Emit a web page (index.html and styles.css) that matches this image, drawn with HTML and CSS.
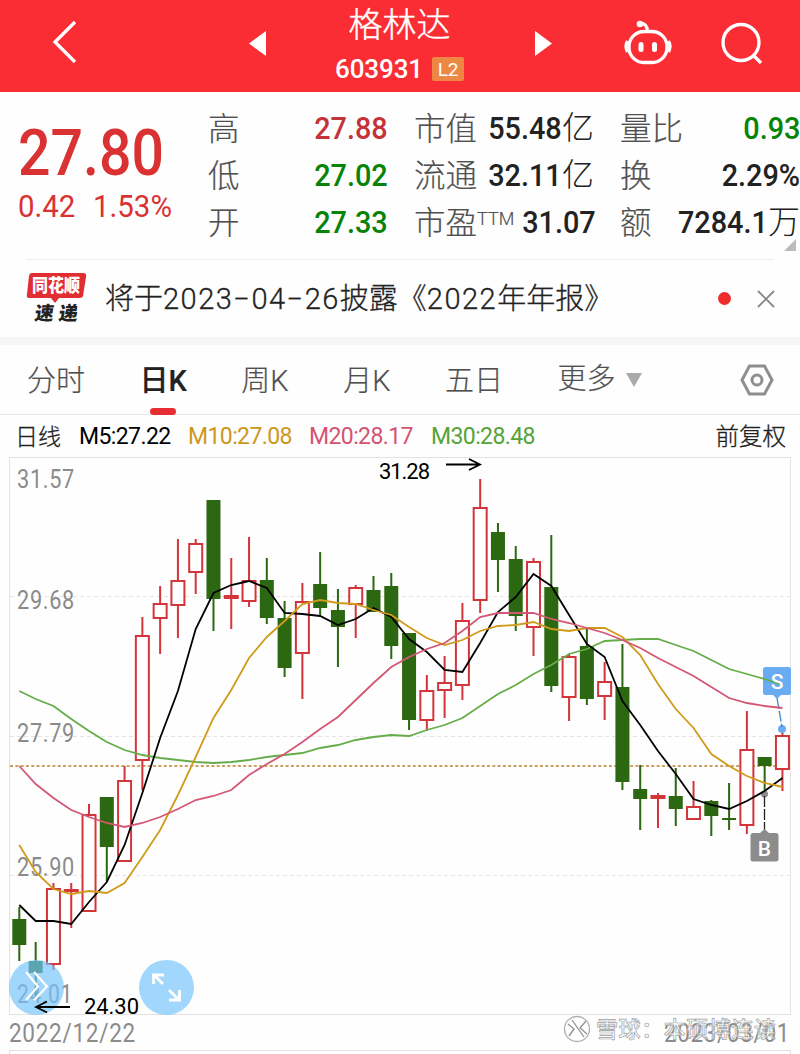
FILE: index.html
```
<!DOCTYPE html>
<html lang="zh-CN">
<head>
    <meta charset="UTF-8">
    <meta name="viewport" content="width=device-width, initial-scale=1.0">
    <title>格林达 603931</title>
    <link rel="stylesheet" href="styles.css">
</head>
<body>

<header class="topbar">
    <svg class="back" width="26" height="44" viewBox="0 0 26 44"><path d="M24 2 L4 22 L24 42"/></svg>
    <svg class="arrow prev" width="17" height="25" viewBox="0 0 17 25"><path d="M17 0 V25 L0 12.5z"/></svg>
    <div class="stock">
        <div class="stock-name">格林达</div>
        <div class="stock-code"><span>603931</span><span class="level">L2</span></div>
    </div>
    <svg class="arrow next" width="17" height="25" viewBox="0 0 17 25"><path d="M0 0 V25 L17 12.5z"/></svg>
    <svg class="robot" width="48" height="46" viewBox="0 0 48 46">
        <rect x="5" y="11.500" width="38" height="31" rx="15"/>
        <path d="M16 3.500 Q23 3 23.500 11"/>
        <path class="ear" d="M3.500 21 Q0.500 26 3.500 32 M44.500 21 Q47.500 26 44.500 32"/>
        <circle class="fill" cx="16" cy="4" r="3.300"/>
        <rect class="fill" x="14.500" y="22" width="5" height="10" rx="2.500"/>
        <rect class="fill" x="28" y="22" width="5" height="10" rx="2.500"/>
    </svg>
    <svg class="search" width="44" height="44" viewBox="0 0 44 44"><circle cx="21" cy="20.500" r="18"/><path d="M33 33 L41 41"/></svg>
</header>

<section class="quote">
    <div class="price">
        <div class="last"><span class="num">27.80</span></div>
        <div class="change"><span class="num">0.42</span><span class="num">1.53%</span></div>
    </div>
    <div class="col">
        <div class="row"><label>高</label><span class="num up">27.88</span></div>
        <div class="row"><label>低</label><span class="num down">27.02</span></div>
        <div class="row"><label>开</label><span class="num down">27.33</span></div>
    </div>
    <div class="col col-mid">
        <div class="row"><label>市值</label><span class="val"><span class="num">55.48</span>亿</span></div>
        <div class="row"><label>流通</label><span class="val"><span class="num">32.11</span>亿</span></div>
        <div class="row"><label>市盈<sup>TTM</sup></label><span class="num">31.07</span></div>
    </div>
    <div class="col col-last">
        <div class="row"><label>量比</label><span class="num down">0.93</span></div>
        <div class="row"><label>换</label><span class="num">2.29%</span></div>
        <div class="row"><label>额</label><span class="val"><span class="num">7284.1</span>万</span></div>
    </div>
    <svg class="corner" width="12" height="12" viewBox="0 0 12 12"><path d="M12 0 V12 H0z"/></svg>
</section>

<section class="notice">
    <svg class="logo" width="62" height="54" viewBox="0 0 62 54">
        <path class="logo-bg" d="M6 1 H57 Q61 1 60 5 L57 24 Q56.500 26 54 26 H33 L29 31 L25 26 H3 Q0 26 1 22 L3 4 Q3.500 1 6 1z"/>
        <text class="logo-top" x="6" y="20" textLength="48" lengthAdjust="spacingAndGlyphs">同花顺</text>
        <text class="logo-bottom" transform="translate(8 48) skewX(-8)" textLength="43">速递</text>
    </svg>
    <p>将于<span class="wide">2023−04−26</span>披露《<span class="wide">2022</span>年年报》</p>
    <i class="dot"></i>
    <svg class="close" width="18" height="18" viewBox="0 0 18 18"><path d="M1 1 L17 17 M17 1 L1 17"/></svg>
</section>

<nav class="tabs">
    <a>分时</a>
    <a class="active">日K</a>
    <a>周K</a>
    <a>月K</a>
    <a>五日</a>
    <a class="more">更多<svg width="16" height="14" viewBox="0 0 16 14"><path d="M0 0 H16 L8 14z"/></svg></a>
    <svg class="setting" width="34" height="32" viewBox="0 0 34 32">
        <path d="M9.500 2 H24.500 L32 16 L24.500 30 H9.500 L2 16z"/>
        <circle cx="17" cy="16" r="5"/>
    </svg>
</nav>

<div class="legend">
    <span class="period">日线</span>
    <span class="m5">M5:27.22</span>
    <span class="m10">M10:27.08</span>
    <span class="m20">M20:28.17</span>
    <span class="m30">M30:28.48</span>
    <span class="adjust">前复权</span>
</div>

<svg id="chart" class="chart" width="800" height="598" viewBox="0 456 800 598">
    <path class="frame" d="M9.500 457.500 H790.500 V1014.500 H9.500z M9.500 1054 V1050.500 H790.500 V1054"/>
    <path class="grid" d="M10 596.500 H790 M10 736.500 H790 M10 875.500 H790"/>
    <g class="axis">
        <text x="17" y="488" textLength="58" lengthAdjust="spacingAndGlyphs">31.57</text>
        <text x="17" y="609" textLength="58" lengthAdjust="spacingAndGlyphs">29.68</text>
        <text x="17" y="742" textLength="58" lengthAdjust="spacingAndGlyphs">27.79</text>
        <text x="17" y="876" textLength="58" lengthAdjust="spacingAndGlyphs">25.90</text>
        <text x="17" y="1003" textLength="56" lengthAdjust="spacingAndGlyphs">24.01</text>
        <text x="9" y="1042" textLength="127" lengthAdjust="spacingAndGlyphs">2022/12/22</text>
        <text x="664" y="1042" textLength="126" lengthAdjust="spacingAndGlyphs">2023/03/01</text>
    </g>
    <path class="now" d="M10 766 H790"/>
    <g id="candles"></g>

    <text class="peak" x="379" y="479" textLength="51">31.28</text>
    <path class="pointer" d="M446 464.500 H479 M469 459 L480 464.500 L469 470"/>
    <text class="peak" x="84" y="1014" textLength="55">24.30</text>

    <g class="tools">
        <circle cx="36.500" cy="987.500" r="27.500"/>
        <circle cx="166.500" cy="987.500" r="27.500"/>
        <path d="M26 972 L38 986.500 L26 1000 M34 972 L47 986.500 L34 1000"/>
        <path class="expand" d="M163 984 L154 975 M153.500 984 V975 H164 M169 990 L179 1000 M179.500 990 V1000 H169"/>
    </g>
    <path class="pointer" d="M70 1007 H36 M47 1001.500 L36 1007 L47 1012.500"/>

    <g class="mark sell">
        <circle cx="782" cy="729" r="4"/>
        <path class="stem" d="M777 698 L782 727"/>
        <path d="M765.500 667 H788.500 Q791 667 791 669.500 V692.500 Q791 695 788.500 695 H781 L777 699 L773 695 H765.500 Q763 695 763 692.500 V669.500 Q763 667 765.500 667z"/>
    </g>
    <g class="mark buy">
        <circle cx="764.500" cy="794" r="3.500"/>
        <path class="stem" d="M764.500 796 V830"/>
        <path d="M753 833 H760 L764.500 829 L769 833 H776 Q778.500 833 778.500 835.500 V859 Q778.500 861.500 776 861.500 H753 Q750.500 861.500 750.500 859 V835.500 Q750.500 833 753 833z"/>
    </g>
    <g id="averages"></g>
    <g class="mark">
        <text x="777" y="689">S</text>
        <text x="764.500" y="855.500">B</text>
    </g>

    <g class="watermark">
        <circle cx="577" cy="1029" r="12.500"/>
        <path d="M568 1024 L574 1029 L569 1036 M572 1020 L584 1037 M586 1021 L580 1028 L587 1034"/>
        <text x="596" y="1037" textLength="180">雪球：本硕博连读</text>
    </g>
</svg>

<script src="chart.js"></script>
</body>
</html>
```
FILE: chart.js
```
// [high, body top, body bottom, low, up/down]
const candles = [
    [907, 919, 945, 961, "d"], [942, 961, 973, 998, "d"], [883, 888, 965, 970, "u"],
    [883, 889, 892, 928, "u"], [804, 814, 912, 912, "u"], [797, 797, 847, 881, "d"],
    [766, 780, 862, 862, "u"], [617, 635, 761, 790, "u"], [586, 603, 619, 654, "u"],
    [539, 580, 606, 638, "u"], [539, 543, 573, 594, "u"], [500, 500, 599, 631, "d"],
    [558, 595, 599, 629, "u"], [537, 580, 602, 607, "u"], [558, 580, 618, 624, "d"],
    [601, 618, 668, 677, "d"], [583, 601, 654, 699, "u"], [552, 584, 608, 615, "d"],
    [589, 610, 627, 667, "d"], [585, 587, 605, 638, "u"], [576, 590, 612, 612, "d"],
    [573, 586, 646, 659, "d"], [633, 633, 720, 730, "d"], [675, 690, 721, 731, "u"],
    [656, 682, 691, 718, "u"], [603, 620, 686, 700, "u"], [479, 507, 601, 613, "u"],
    [523, 532, 560, 592, "d"], [546, 559, 616, 631, "d"], [558, 561, 628, 656, "u"],
    [535, 587, 686, 692, "d"], [654, 656, 698, 721, "u"], [628, 646, 699, 705, "d"],
    [662, 681, 697, 720, "u"], [644, 687, 782, 790, "d"], [765, 789, 799, 830, "d"],
    [793, 795, 799, 828, "u"], [768, 796, 809, 826, "d"], [781, 806, 820, 820, "u"],
    [800, 801, 816, 836, "d"], [783, 818, 820, 830, "d"], [711, 749, 826, 834, "u"],
    [757, 757, 766, 794, "d"], [730, 735, 770, 791, "u"]
];

const averages = {
    m30: [691, 699, 706, 719, 731, 742, 750, 755, 758, 760, 762, 763, 762, 760, 757, 755, 753, 748, 745, 740, 737, 735, 736, 730, 725, 718, 706, 694, 685, 674, 665, 654, 649, 641, 640, 639, 639, 645, 651, 660, 669, 674, 679, 685],
    m5: [905, 921, 921, 924, 902, 882, 845, 793, 738, 691, 629, 593, 585, 581, 588, 613, 614, 616, 625, 619, 608, 617, 639, 652, 670, 672, 643, 612, 597, 574, 586, 615, 644, 657, 701, 725, 751, 774, 799, 805, 809, 801, 791, 778],
    m10: [845, 872, 889, 894, 891, 893, 883, 857, 830, 795, 757, 718, 690, 658, 637, 621, 604, 600, 603, 604, 610, 615, 627, 638, 645, 640, 631, 626, 625, 622, 629, 631, 628, 628, 637, 655, 684, 709, 728, 754, 766, 776, 783, 787],
    m20: [766, 784, 798, 810, 817, 823, 827, 823, 817, 809, 800, 796, 790, 775, 764, 754, 742, 729, 717, 700, 683, 667, 657, 649, 643, 631, 617, 613, 613, 613, 619, 623, 628, 633, 640, 648, 658, 667, 676, 687, 698, 703, 706, 708]
};

const xAt = i => i === 0 ? 19.3 : 17.9 + i * 17.78;

let bodies = "";
candles.forEach(([high, top, bottom, low, dir], i) => {
    const x = xAt(i);
    const inset = dir === "u" ? 1 : 0;
    bodies += `<g class="${dir}">
        <path d="M${x} ${high} V${top} M${x} ${bottom} V${low}"/>
        <rect x="${x - 7 + inset / 2}" y="${top + inset}" width="${14 - inset}" height="${bottom - top - inset * 2}"/>
    </g>`;
});
document.getElementById("candles").innerHTML = bodies;

let lines = "";
for (const name in averages) {
    const points = averages[name].map((y, i) => `${xAt(i)},${y}`).join(" ");
    lines += `<polyline class="line-${name}" points="${points}"/>`;
}
document.getElementById("averages").innerHTML = lines;
```
FILE: styles.css
```
* {
    box-sizing: border-box;
}

body {
    margin: 0;
    width: 800px;
    height: 1054px;
    overflow: hidden;
    background: #fefefe;
    color: #222;
    font-family: Roboto, "Noto Sans CJK SC", sans-serif;
    font-weight: 300;
}

svg {
    display: block;
    flex: none;
}

/* header */
.topbar {
    display: flex;
    align-items: flex-start;
    height: 92px;
    background: #fb2d34;
    color: #fff;
}

.topbar svg {
    fill: none;
    stroke: #fff;
    stroke-width: 3.3;
}

.back {
    margin: 20px 0 0 51px;
}

.topbar .arrow {
    fill: #fff;
    stroke: none;
}

.prev {
    margin: 31px 0 0 172px;
}

.next {
    margin: 31px 0 0 33px;
}

.stock {
    width: 236px;
    padding-left: 31px;
    text-align: center;
}

.stock-name {
    height: 49px;
    line-height: 51px;
    font-size: 34px;
    -webkit-text-stroke: 0.4px;
}

.stock-code {
    display: flex;
    justify-content: center;
    align-items: center;
    gap: 9px;
    height: 40px;
    font-size: 26px;
    font-weight: 500;
    letter-spacing: -0.1px;
}

.level {
    width: 32px;
    height: 24px;
    line-height: 25px;
    border-radius: 2px;
    background: #ee8743;
    font-size: 19px;
    font-weight: 400;
}

.robot {
    margin: 20px 0 0 72px;
}

.topbar .robot .fill {
    fill: #fff;
    stroke: none;
}

.search {
    margin: 22px 0 0 48px;
}

/* quote */
.quote {
    position: relative;
    display: flex;
    height: 168px;
    padding-top: 13px;
}

.num {
    display: inline-block;
    font-weight: 500;
    transform: scaleX(0.9);
    transform-origin: right;
}

.price {
    width: 208px;
    padding-left: 18px;
    color: #da3133;
}

.price .num {
    transform: scaleX(0.88);
    transform-origin: left;
}

.last {
    height: 81px;
    padding-top: 16px;
    line-height: 65px;
    font-size: 65px;
}

.change {
    display: flex;
    gap: 13px;
    padding-top: 3px;
    line-height: 34px;
    font-size: 32px;
}

.price .change .num {
    font-weight: 400;
    transform: scaleX(0.92);
}

.col {
    width: 180px;
}

.col-mid,
.col-last {
    margin-left: 26px;
}

.row {
    display: flex;
    justify-content: space-between;
    height: 47px;
    line-height: 47px;
    font-size: 32px;
    white-space: nowrap;
}

.row label {
    padding-top: 1px;
    color: #505050;
    font-size: 31.500px;
    -webkit-text-stroke: 0.2px;
}

.row .val {
    margin-left: -20px;
}

.row sup {
    font-size: 18px;
    line-height: 0;
    vertical-align: 9px;
}

.up {
    color: #c43339;
}

.down {
    color: #078307;
}

.corner {
    position: absolute;
    right: 4px;
    bottom: 9px;
    fill: #bbb;
}

/* notice */
.notice {
    display: flex;
    align-items: center;
    height: 85px;
    padding: 0 25px 0 26px;
    border-bottom: 8px solid #f5f5f5;
    position: relative;
}

.notice::before {
    content: "";
    position: absolute;
    top: -1px;
    left: 26px;
    right: 26px;
    height: 1px;
    background: #eee;
}

.logo-bg {
    fill: #e02e32;
}

.logo-top {
    fill: #fff;
    font-size: 18px;
    font-weight: 900;
}

.logo-bottom {
    fill: #222;
    font-size: 19px;
    font-weight: 900;
}

.notice p {
    flex: 1;
    margin: 0 0 5px 17px;
    font-size: 29px;
    -webkit-text-stroke: 0.3px;
    white-space: nowrap;
}

.wide {
    letter-spacing: 1.500px;
}

.dot {
    width: 13px;
    height: 13px;
    margin-right: 26px;
    border-radius: 50%;
    background: #ee2c2c;
}

.close {
    fill: none;
    stroke: #888;
    stroke-width: 1.8;
}

/* tabs */
.tabs {
    display: flex;
    align-items: center;
    gap: 54.500px;
    height: 70px;
    padding: 0 26px 0 27px;
    border-bottom: 1px solid #eaeaea;
    color: #505050;
    font-size: 29px;
    -webkit-text-stroke: 0.2px;
}

.tabs a {
    position: relative;
    height: 70px;
    line-height: 73px;
    white-space: nowrap;
}

.tabs .active {
    color: #222;
    font-weight: 500;
}

.active::after {
    content: "";
    position: absolute;
    left: 50%;
    bottom: 0;
    width: 26px;
    height: 7px;
    margin-left: -13px;
    border-radius: 4px;
    background: #e62e32;
}

.more {
    display: flex;
    align-items: center;
    gap: 10px;
    fill: #aaa;
}

.setting {
    margin-left: auto;
    fill: none;
    stroke: #8e8e8e;
    stroke-width: 3;
}

/* legend */
.legend {
    display: flex;
    align-items: center;
    height: 41px;
    padding: 2px 14px 0 15px;
    font-size: 23px;
    font-weight: 400;
    letter-spacing: -0.600px;
    white-space: nowrap;
}

.period,
.adjust {
    padding-bottom: 3px;
    font-weight: 300;
    letter-spacing: 0;
    -webkit-text-stroke: 0.3px;
}

.period {
    width: 64px;
}

.m5 {
    width: 109px;
    color: #000;
}

.m10 {
    width: 121px;
    color: #cc981b;
}

.m20 {
    width: 122px;
    color: #d45373;
}

.m30 {
    color: #56a437;
}

.adjust {
    margin-left: auto;
    font-size: 23.500px;
}

/* chart */
.frame {
    fill: none;
    stroke: #e2e2e2;
}

.grid {
    stroke: #e4e4e4;
    stroke-dasharray: 4 3;
}

.axis {
    fill: #8b8b8b;
    font-size: 25.500px;
    font-weight: 400;
    letter-spacing: 0.800px;
}

.now {
    stroke: #bd812c;
    stroke-width: 1.400;
    stroke-dasharray: 3 2.300;
}

.u {
    fill: #fff;
    stroke: #d3353b;
    stroke-width: 2;
}

.d {
    fill: #2c6711;
    stroke: #2c6711;
    stroke-width: 2;
}

.d rect {
    stroke: none;
}

#averages {
    fill: none;
    stroke-width: 1.800;
}

.line-m5 {
    stroke: #000;
}

.line-m10 {
    stroke: #d09b1b;
}

.line-m20 {
    stroke: #d45775;
}

.line-m30 {
    stroke: #66ad4a;
}

.peak {
    fill: #000;
    font-size: 22px;
    font-weight: 400;
}

.pointer {
    fill: none;
    stroke: #000;
    stroke-width: 1.800;
}

.tools circle {
    fill: #74c2fc;
    fill-opacity: 0.68;
}

.tools path {
    fill: none;
    stroke: #fff;
    stroke-width: 2.200;
}

.tools .expand {
    stroke-width: 2.800;
}

.mark text {
    fill: #fff;
    stroke: none;
    font-size: 21px;
    font-weight: 500;
    text-anchor: middle;
}

.sell {
    fill: #69acf3;
}

.buy {
    fill: #8c8c8c;
}

.sell .stem {
    stroke: #3f86c8;
    stroke-width: 1.300;
    stroke-dasharray: 11 2;
}

.buy .stem {
    stroke: #222;
    stroke-width: 1.300;
    stroke-dasharray: 11 2;
}

.watermark text {
    fill: #fff;
    fill-opacity: 0.6;
    stroke: #a0a0a0;
    stroke-width: 0.700;
    font-size: 22px;
    font-weight: 500;
}

.watermark circle {
    fill: none;
    stroke: #b0b0b0;
    stroke-width: 1.300;
}

.watermark path {
    fill: none;
    stroke: #909090;
    stroke-width: 1.300;
}
```
